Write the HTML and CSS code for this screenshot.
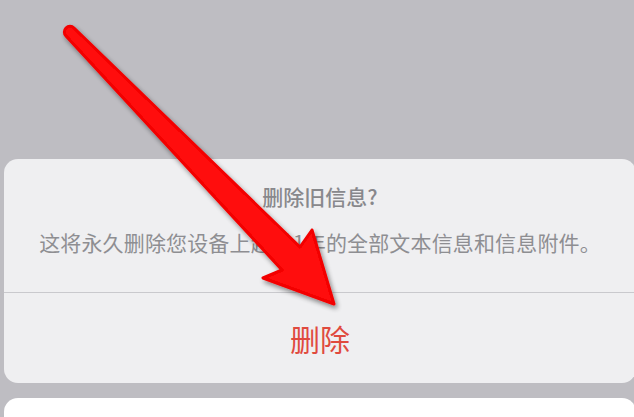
FILE: index.html
```html
<!DOCTYPE html>
<html lang="zh-CN">
<head>
<meta charset="utf-8">
<title>删除旧信息</title>
<link rel="stylesheet" href="styles.css">
</head>
<body>
<div class="screen">
  <div class="sheet">
    <div class="card">
      <div class="header">
        <div class="title">删除旧信息?</div>
        <div class="message">这将永久删除您设备上超过1年的全部文本信息和信息附件。</div>
      </div>
      <div class="action">删除</div>
    </div>
    <div class="cancel"></div>
  </div>
  <svg class="arrow" width="634" height="417" viewBox="0 0 634 417" xmlns="http://www.w3.org/2000/svg">
    <defs>
      <filter id="sh" x="-20%" y="-20%" width="140%" height="140%">
        <feGaussianBlur in="SourceAlpha" stdDeviation="2.5"/>
        <feOffset dx="2" dy="3" result="b"/>
        <feComponentTransfer><feFuncA type="linear" slope="0.45"/></feComponentTransfer>
        <feMerge><feMergeNode/><feMergeNode in="SourceGraphic"/></feMerge>
      </filter>
    </defs>
    <g filter="url(#sh)">
      <path d="M66 36 L282 270 L263 278 L334 304 L312 230 L300 247 L74 28 A5.6 5.6 0 0 0 66 36 Z" fill="#ff0a0a" stroke="#f20000" stroke-width="3" stroke-linejoin="round"/>
    </g>
  </svg>
</div>
</body>
</html>
```
FILE: styles.css
```css
html, body {
  margin: 0;
  padding: 0;
}
body {
  width: 634px;
  height: 417px;
  overflow: hidden;
  background: #bebdc2;
  font-family: "Noto Sans CJK SC", "Noto Sans", sans-serif;
}
.screen {
  position: relative;
  width: 634px;
  height: 417px;
  padding-top: 159px;
  box-sizing: border-box;
  overflow: hidden;
}
.sheet {
  margin: 0 -2px 0 4px;
  display: flex;
  flex-direction: column;
  gap: 15px;
}
.card {
  background: #efeff1;
  border-radius: 14px;
  height: 224px;
  display: flex;
  flex-direction: column;
}
.header {
  height: 134px;
  box-sizing: border-box;
  border-bottom: 1px solid #c9c9cd;
  padding-top: 25px;
  text-align: center;
}
.title {
  font-size: 21px;
  line-height: 24px;
  font-weight: 500;
  color: #88888c;
}
.message {
  margin-top: 21px;
  font-size: 21px;
  line-height: 26px;
  letter-spacing: 0.15px;
  color: #8e8e92;
}
.action {
  flex: 1;
  display: flex;
  align-items: center;
  justify-content: center;
  font-size: 30px;
  color: #e04a3e;
}
.cancel {
  background: #ffffff;
  border-radius: 14px 14px 0 0;
  height: 19px;
}
.arrow {
  position: absolute;
  left: 0;
  top: 0;
}
```
